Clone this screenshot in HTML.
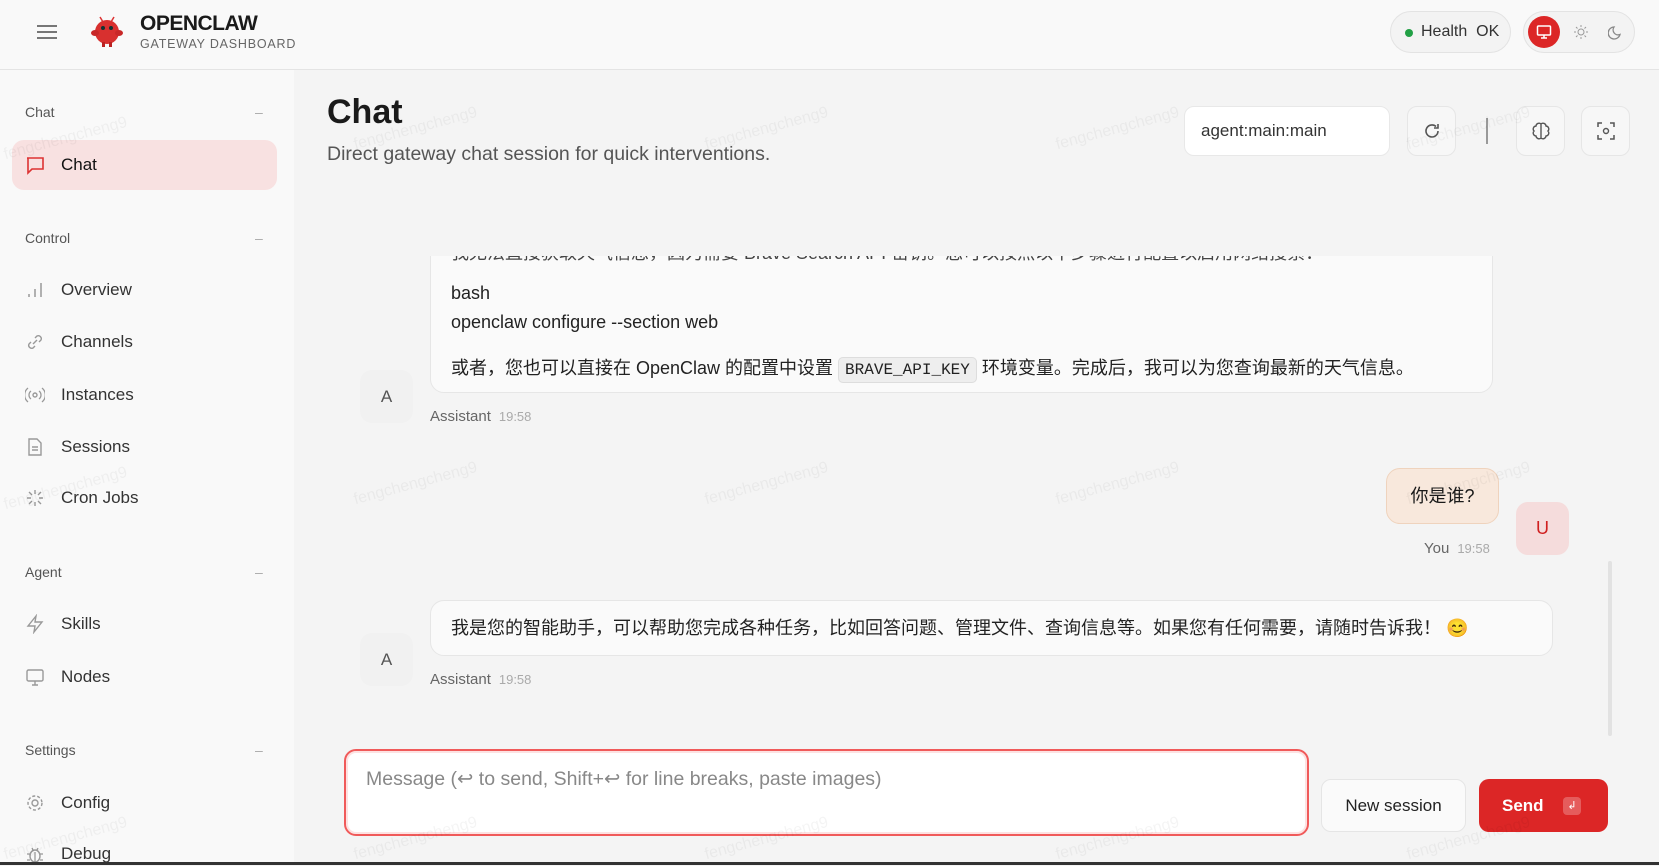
<!DOCTYPE html>
<html><head><meta charset="utf-8"><style>
*{box-sizing:border-box;margin:0;padding:0}
body{width:1659px;height:865px;overflow:hidden;background:#f4f4f4;font-family:"Liberation Sans","Noto Sans CJK SC",sans-serif;color:#1a1a1a;position:relative}
.hdr{position:absolute;left:0;top:0;width:1659px;height:70px;background:#f9f9f9;border-bottom:1px solid #e4e4e4}
.side{position:absolute;left:0;top:70px;width:294px;height:795px;background:#f9f9f9}
.abs{position:absolute}
.sec{position:absolute;left:25px;font-size:14px;color:#555}
.sec i{position:absolute;left:230px;font-style:normal;color:#aaa}
.item{position:absolute;left:25px;font-size:17px;color:#333;height:24px;line-height:24px;padding-left:36px}
.item svg{position:absolute;left:0;top:2px}
.wm{position:absolute;font-size:16px;color:rgba(0,0,0,0.045);transform:rotate(-15deg);white-space:nowrap}
.btn{position:absolute;background:#f7f7f7;border:1px solid #e6e6e6;border-radius:10px;display:flex;align-items:center;justify-content:center}
.bub{position:absolute;background:#fafafa;border:1px solid #e6e6e6;border-radius:14px;font-size:18px;color:#222}
.av{position:absolute;width:53px;height:53px;border-radius:12px;background:#f1f1f1;display:flex;align-items:center;justify-content:center;font-size:17px;color:#555}
.meta{position:absolute;font-size:15px;color:#666}
.meta span{color:#aaa;font-size:13px;margin-left:8px}
</style></head><body>
<div class="hdr">
<svg class="abs" style="left:37px;top:24px" width="20" height="16"><path d="M0 2h20M0 8h20M0 14h20" stroke="#777" stroke-width="2"/></svg>
<svg class="abs" style="left:88px;top:12px" width="38" height="38" viewBox="0 0 38 38"><path d="M12 5l3 5M26 5l-3 5" stroke="#d33" stroke-width="1.5"/><ellipse cx="19" cy="20" rx="12" ry="12" fill="#d8302f"/><ellipse cx="7" cy="21" rx="4" ry="3" fill="#c82828"/><ellipse cx="31" cy="21" rx="4" ry="3" fill="#c82828"/><circle cx="15" cy="16" r="2" fill="#133"/><circle cx="23" cy="16" r="2" fill="#133"/><rect x="14" y="30" width="3" height="5" fill="#b22"/><rect x="21" y="30" width="3" height="5" fill="#b22"/></svg>
<div class="abs" style="left:140px;top:12px;font-size:21px;font-weight:bold;letter-spacing:-0.5px">OPENCLAW</div>
<div class="abs" style="left:140px;top:37px;font-size:12.5px;color:#666;letter-spacing:0.8px">GATEWAY DASHBOARD</div>
<div class="abs" style="left:1390px;top:11px;width:121px;height:42px;border:1px solid #e3e3e3;border-radius:21px;background:#f3f3f3;font-size:16px;line-height:40px;padding-left:30px;color:#333">Health&nbsp; OK<span class="abs" style="left:14px;top:17px;width:8px;height:8px;border-radius:50%;background:#22a045"></span></div>
<div class="abs" style="left:1523px;top:11px;width:112px;height:42px;border:1px solid #e3e3e3;border-radius:21px;background:#f3f3f3">
<div class="abs" style="left:4px;top:4px;width:32px;height:32px;border-radius:50%;background:#dc2626"></div>
<svg class="abs" style="left:12px;top:12px" width="16" height="16"><rect x="1.5" y="2" width="13" height="9" rx="1" fill="none" stroke="#fff" stroke-width="1.5"/><path d="M5 14h6M8 11v3" stroke="#fff" stroke-width="1.5"/></svg>
<svg class="abs" style="left:50px;top:13px" width="14" height="14"><circle cx="7" cy="7" r="3" fill="none" stroke="#999"/><path d="M7 0v2M7 12v2M0 7h2M12 7h2M2 2l1.5 1.5M10.5 10.5L12 12M2 12l1.5-1.5M10.5 3.5L12 2" stroke="#999"/></svg>
<svg class="abs" style="left:84px;top:13px" width="15" height="15"><path d="M12 9.5A6 6 0 1 1 6 2a5 5 0 0 0 6 7.5z" fill="none" stroke="#888" stroke-width="1.3"/></svg>
</div>
</div>
<div class="side">
<div class="sec" style="top:34px">Chat<i>–</i></div>
<div class="abs" style="left:12px;top:70px;width:265px;height:50px;background:#f8e1e1;border-radius:12px"></div>
<div class="item" style="top:83px;color:#111">Chat<svg width="20" height="20"><path d="M2 3h16v11H7l-4 4V3z" fill="none" stroke="#d33" stroke-width="1.6"/></svg></div>
<div class="sec" style="top:160px">Control<i>–</i></div>
<div class="item" style="top:208px">Overview<svg width="20" height="20"><path d="M4 17v-3M10 17V9M16 17V3" stroke="#999" stroke-width="1.5"/></svg></div>
<div class="item" style="top:260px">Channels<svg width="20" height="20"><path d="M8 12l4-4M6 10l-2 2a3 3 0 0 0 4 4l2-2M14 10l2-2a3 3 0 0 0-4-4l-2 2" fill="none" stroke="#999" stroke-width="1.4"/></svg></div>
<div class="item" style="top:313px">Instances<svg width="20" height="20"><circle cx="10" cy="10" r="2" fill="none" stroke="#999" stroke-width="1.4"/><path d="M6 6a5 5 0 0 0 0 8M14 6a5 5 0 0 1 0 8M3 3a9 9 0 0 0 0 14M17 3a9 9 0 0 1 0 14" fill="none" stroke="#999" stroke-width="1.3"/></svg></div>
<div class="item" style="top:365px">Sessions<svg width="20" height="20"><path d="M4 2h8l4 4v12H4z M7 10h6M7 13h6" fill="none" stroke="#999" stroke-width="1.4"/></svg></div>
<div class="item" style="top:416px">Cron Jobs<svg width="20" height="20"><path d="M10 2v4M10 14v4M2 10h4M14 10h4M4 4l3 3M13 13l3 3M4 16l3-3M13 7l3-3" stroke="#999" stroke-width="1.4"/></svg></div>
<div class="sec" style="top:494px">Agent<i>–</i></div>
<div class="item" style="top:542px">Skills<svg width="20" height="20"><path d="M11 2L3 12h7l-1 6 8-10h-7z" fill="none" stroke="#999" stroke-width="1.4"/></svg></div>
<div class="item" style="top:595px">Nodes<svg width="20" height="20"><rect x="2" y="3" width="16" height="11" rx="1.5" fill="none" stroke="#999" stroke-width="1.4"/><path d="M7 18h6M10 14v4" stroke="#999" stroke-width="1.4"/></svg></div>
<div class="sec" style="top:672px">Settings<i>–</i></div>
<div class="item" style="top:721px">Config<svg width="20" height="20"><circle cx="10" cy="10" r="3" fill="none" stroke="#999" stroke-width="1.4"/><circle cx="10" cy="10" r="7" fill="none" stroke="#999" stroke-width="1.4" stroke-dasharray="3 2"/></svg></div>
<div class="item" style="top:772px">Debug<svg width="20" height="20"><ellipse cx="10" cy="12" rx="5" ry="6" fill="none" stroke="#999" stroke-width="1.4"/><path d="M2 10h3M15 10h3M2 16h3M15 16h3M7 4l1 2M13 4l-1 2M10 8v10" stroke="#999" stroke-width="1.3"/></svg></div>
</div>
<div class="abs" style="left:327px;top:93px;font-size:34px;font-weight:bold">Chat</div>
<div class="abs" style="left:327px;top:143px;font-size:19.5px;color:#555">Direct gateway chat session for quick interventions.</div>
<div class="abs" style="left:1184px;top:106px;width:206px;height:50px;background:#fff;border:1px solid #e8e8e8;border-radius:10px;font-size:17px;line-height:48px;padding-left:16px;color:#333">agent:main:main</div>
<div class="btn" style="left:1407px;top:106px;width:49px;height:50px"><svg width="20" height="20"><path d="M16 10a6 6 0 1 1-2-4.5M16 3v4h-4" fill="none" stroke="#555" stroke-width="1.6"/></svg></div>
<div class="abs" style="left:1486px;top:118px;width:2px;height:26px;background:#999"></div>
<div class="btn" style="left:1516px;top:106px;width:49px;height:50px"><svg width="22" height="22"><path d="M11 3v16M11 4a3 3 0 0 0-5 2 3 3 0 0 0-2 5 3 3 0 0 0 2 5 3 3 0 0 0 5 2M11 4a3 3 0 0 1 5 2 3 3 0 0 1 2 5 3 3 0 0 1-2 5 3 3 0 0 1-5 2" fill="none" stroke="#555" stroke-width="1.4"/></svg></div>
<div class="btn" style="left:1581px;top:106px;width:49px;height:50px"><svg width="18" height="18"><path d="M1 5V1h4M13 1h4v4M17 13v4h-4M5 17H1v-4" fill="none" stroke="#555" stroke-width="1.5"/><circle cx="9" cy="9" r="2.5" fill="none" stroke="#555" stroke-width="1.4"/></svg></div>

<div class="abs" style="left:294px;top:256px;width:1365px;height:480px;overflow:hidden">
<div class="bub" style="left:136px;top:-40px;width:1063px;height:177px">
<div class="abs" style="left:20px;top:22px;color:#444;white-space:nowrap">我无法直接获取天气信息，因为需要 Brave Search API 密钥。您可以按照以下步骤进行配置以启用网络搜索：</div>
<div class="abs" style="left:20px;top:66px">bash</div>
<div class="abs" style="left:20px;top:95px">openclaw configure --section web</div>
<div class="abs" style="left:20px;top:137px;white-space:nowrap">或者，您也可以直接在 OpenClaw 的配置中设置 <span style="font-family:'Liberation Mono',monospace;font-size:16px;background:#eee;border:1px solid #ddd;border-radius:5px;padding:3px 6px">BRAVE_API_KEY</span> 环境变量。完成后，我可以为您查询最新的天气信息。</div>
</div>
<div class="av" style="left:66px;top:114px">A</div>
<div class="meta" style="left:136px;top:152px">Assistant<span>19:58</span></div>
<div class="abs" style="left:1092px;top:212px;width:113px;height:56px;background:#f8e8dc;border:1px solid #efd3bd;border-radius:14px;font-size:18px;line-height:54px;text-align:center">你是谁?</div>
<div class="av" style="left:1222px;top:246px;background:#f5dcdc;color:#d02020;font-size:18px">U</div>
<div class="meta" style="left:1130px;top:284px">You<span>19:58</span></div>
<div class="bub" style="left:136px;top:344px;width:1123px;height:56px;line-height:54px;padding-left:20px;white-space:nowrap">我是您的智能助手，可以帮助您完成各种任务，比如回答问题、管理文件、查询信息等。如果您有任何需要，请随时告诉我！ 😊</div>
<div class="av" style="left:66px;top:377px">A</div>
<div class="meta" style="left:136px;top:415px">Assistant<span>19:58</span></div>
<div class="abs" style="left:1314px;top:305px;width:4px;height:175px;background:#e2e2e2;border-radius:2px"></div>
</div>

<div class="abs" style="left:344px;top:749px;width:965px;height:87px;border:2px solid #f05a5a;border-radius:12px;background:#fff;box-shadow:inset 0 0 0 2px #fde2e2"></div>
<div class="abs" style="left:366px;top:767px;font-size:19.5px;color:#888">Message (↩ to send, Shift+↩ for line breaks, paste images)</div>
<div class="abs" style="left:1321px;top:779px;width:145px;height:53px;background:#fafafa;border:1px solid #e5e5e5;border-radius:10px;font-size:17px;line-height:51px;text-align:center;color:#222">New session</div>
<div class="abs" style="left:1479px;top:779px;width:129px;height:53px;background:#dc2626;border-radius:10px;font-size:17px;line-height:53px;color:#fff;padding-left:23px;font-weight:bold">Send<span class="abs" style="left:84px;top:18px;width:18px;height:18px;background:rgba(255,255,255,0.25);border-radius:4px;font-size:11px;line-height:18px;text-align:center;font-weight:normal">↲</span></div>
<div class="abs" style="left:0;top:862px;width:1659px;height:3px;background:#333"></div>

<div class="wm" style="left:2px;top:130px">fengchengcheng9</div>
<div class="wm" style="left:352px;top:120px">fengchengcheng9</div>
<div class="wm" style="left:703px;top:120px">fengchengcheng9</div>
<div class="wm" style="left:1054px;top:120px">fengchengcheng9</div>
<div class="wm" style="left:1405px;top:120px">fengchengcheng9</div>
<div class="wm" style="left:2px;top:480px">fengchengcheng9</div>
<div class="wm" style="left:352px;top:475px">fengchengcheng9</div>
<div class="wm" style="left:703px;top:475px">fengchengcheng9</div>
<div class="wm" style="left:1054px;top:475px">fengchengcheng9</div>
<div class="wm" style="left:1405px;top:475px">fengchengcheng9</div>
<div class="wm" style="left:2px;top:830px">fengchengcheng9</div>
<div class="wm" style="left:352px;top:830px">fengchengcheng9</div>
<div class="wm" style="left:703px;top:830px">fengchengcheng9</div>
<div class="wm" style="left:1054px;top:830px">fengchengcheng9</div>
<div class="wm" style="left:1405px;top:830px">fengchengcheng9</div>
</body></html>
